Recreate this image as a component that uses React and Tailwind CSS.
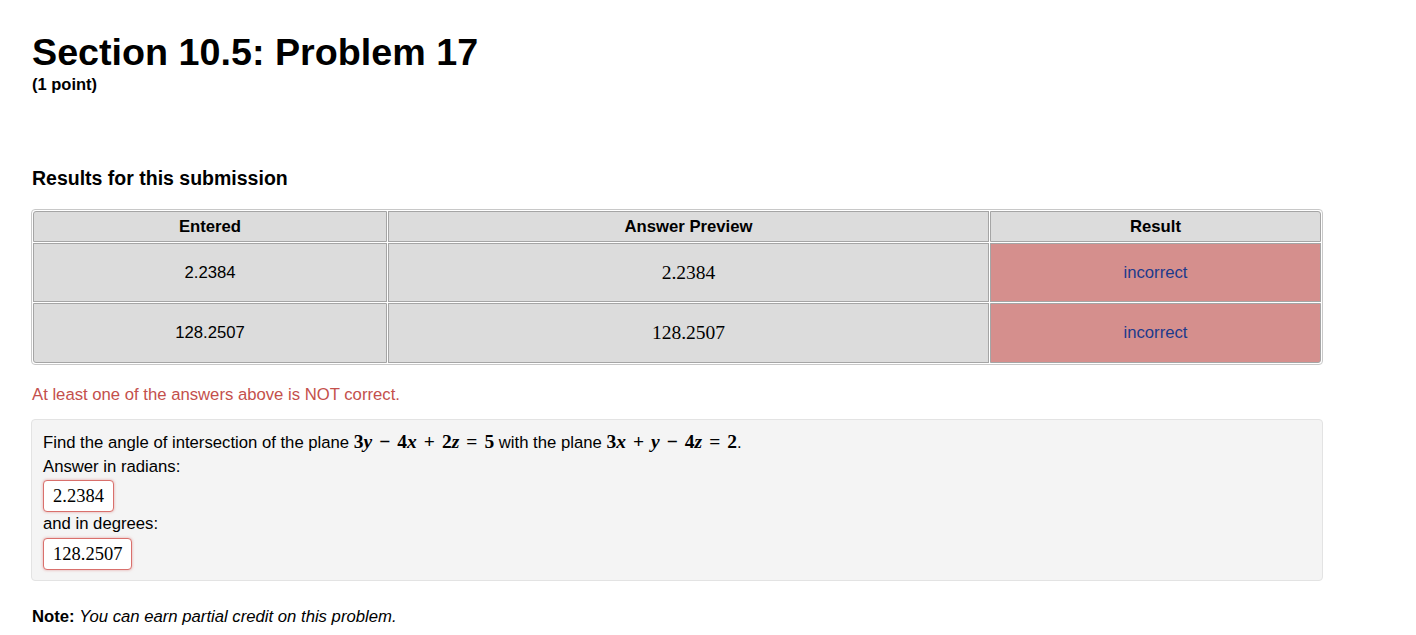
import React from 'react'

const math = { fontFamily: '"Liberation Serif", "DejaVu Serif", serif' }

function M({ children }) {
    return <span className="font-bold text-[19.5px]" style={math}>{children}</span>
}

function V({ children }) {
    return <i className="font-bold">{children}</i>
}

function Op({ children }) {
    return <span className="mx-[7px]">{children}</span>
}

function AnswerBox({ value }) {
    return (
        <span className="inline-block h-[32px] bg-white border border-[#d9706c] rounded-[4px] px-[9px] shadow-[0_0_3px_rgba(217,112,108,0.6)] text-[18.5px] leading-[30px]" style={math}>
            {value}
        </span>
    )
}

const rows = [
    { value: '2.2384', h: 'h-[59px]' },
    { value: '128.2507', h: 'h-[60px]' },
]

export default function App() {
    return (
        <div className="min-h-screen bg-white text-black px-[32px] pt-[32px] text-[16.7px] font-['Liberation_Sans',Arial,sans-serif]">
            {/* Title */}
            <h1 className="text-[37.7px] font-bold leading-[40px]">Section 10.5: Problem 17</h1>
            <div className="text-[16.5px] font-bold leading-[18px] mt-[3px]">(1 point)</div>

            <h2 className="text-[19.5px] font-bold leading-[24px] mt-[73px]">Results for this submission</h2>

            {/* Results table */}
            <table className="mt-[19px] w-[1292px] -ml-px border-separate border-spacing-[1px] border border-[#c8c8c8] rounded-[4px]">
                <thead>
                    <tr>
                        <th className="w-[354px] h-[31px] bg-[#dcdcdc] border border-[#a5a5a5] font-bold rounded-tl-[3px]">Entered</th>
                        <th className="w-[601px] bg-[#dcdcdc] border border-[#a5a5a5] font-bold">Answer Preview</th>
                        <th className="bg-[#dcdcdc] border border-[#a5a5a5] font-bold rounded-tr-[3px]">Result</th>
                    </tr>
                </thead>
                <tbody>
                    {rows.map((r, i) => (
                        <tr key={r.value}>
                            <td className={`${r.h} bg-[#dcdcdc] border border-[#a5a5a5] text-center ${i === 1 ? 'rounded-bl-[3px]' : ''}`}>{r.value}</td>
                            <td className="bg-[#dcdcdc] border border-[#a5a5a5] text-center text-[19.5px]" style={math}>{r.value}</td>
                            <td className={`bg-[#d58f8d] border border-[#a5a5a5] text-center text-[#1c3a8c] ${i === 1 ? 'rounded-br-[3px]' : ''}`}>incorrect</td>
                        </tr>
                    ))}
                </tbody>
            </table>

            <p className="text-[#c4504c] mt-[19px] leading-[22px]">At least one of the answers above is NOT correct.</p>

            {/* Problem */}
            <div className="mt-[13px] w-[1292px] -ml-px bg-[#f4f4f4] border border-[#e3e3e3] rounded-[4px] px-[11px] pt-[10px] pb-[10px] leading-[24px]">
                <div>
                    Find the angle of intersection of the plane{' '}
                    <M>3<V>y</V><Op>−</Op>4<V>x</V><Op>+</Op>2<V>z</V><Op>=</Op>5</M>{' '}
                    with the plane{' '}
                    <M>3<V>x</V><Op>+</Op><V>y</V><Op>−</Op>4<V>z</V><Op>=</Op>2</M>.
                </div>
                <div>Answer in radians:</div>
                <div className="mt-[1px] h-[32px]"><AnswerBox value="2.2384" /></div>
                <div>and in degrees:</div>
                <div className="mt-[2px] h-[32px]"><AnswerBox value="128.2507" /></div>
            </div>

            <p className="mt-[25px] leading-[22px]">
                <b>Note:</b> <i>You can earn partial credit on this problem.</i>
            </p>
        </div>
    )
}
